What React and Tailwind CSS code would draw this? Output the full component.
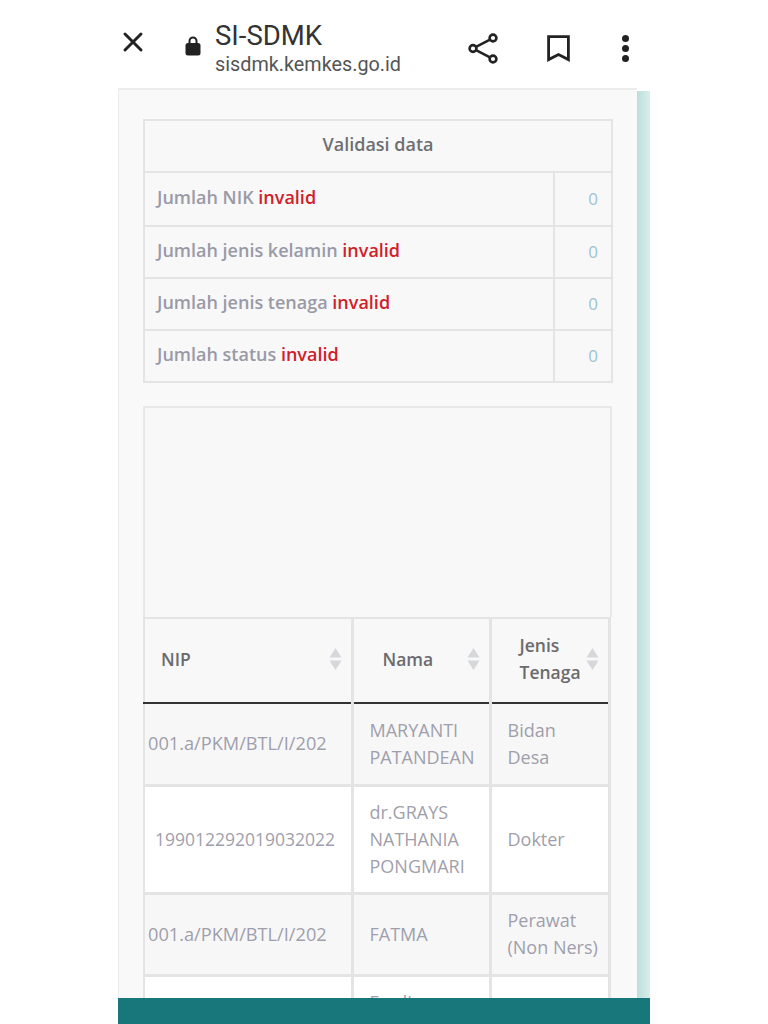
import { X } from "lucide-react";

const validations = [
  { label: "Jumlah NIK", h: "h-[54px]" },
  { label: "Jumlah jenis kelamin", h: "h-[52px]" },
  { label: "Jumlah jenis tenaga", h: "h-[52px]" },
  { label: "Jumlah status", h: "h-[52px]" },
];

const rows = [
  { nip: "001.a/PKM/BTL/I/202", nipClass: "pl-[3px] text-[18.2px]", nama: ["MARYANTI", "PATANDEAN"], jenis: ["Bidan", "Desa"], bg: "bg-[#f7f7f8]", h: "h-[82px]" },
  { nip: "199012292019032022", nipClass: "pl-[10px] text-[17.5px]", nama: ["dr.GRAYS", "NATHANIA", "PONGMARI"], jenis: ["Dokter"], bg: "bg-white", h: "h-[108px]" },
  { nip: "001.a/PKM/BTL/I/202", nipClass: "pl-[3px] text-[18.2px]", nama: ["FATMA"], jenis: ["Perawat", "(Non Ners)"], bg: "bg-[#f7f7f8]", h: "h-[82px]" },
  { nip: "", nipClass: "", nama: ["Ferdi", "\u00a0", "\u00a0"], jenis: [""], bg: "bg-white", h: "h-[108px]" },
];

function SortIcon() {
  return (
    <svg width="13" height="22" viewBox="0 0 13 22" className="shrink-0">
      <path d="M6.5 0 L12.5 9.5 H0.5 Z" fill="#d5d7da" />
      <path d="M6.5 22 L12.5 12.5 H0.5 Z" fill="#d5d7da" />
    </svg>
  );
}

function Head({ pl, lines }) {
  return (
    <th className="border-r-[3px] border-b-2 border-r-[#e4e4e4] border-b-[#333333] p-0 font-semibold text-[#6b6b6d]">
      <div className={`flex items-center justify-between pr-[9px] pb-[3px] ${pl}`}>
        <div className="text-left text-[17.5px] leading-[27px]">
          {lines.map((l) => (
            <div key={l}>{l}</div>
          ))}
        </div>
        <SortIcon />
      </div>
    </th>
  );
}

export default function App() {
  return (
    <div className="relative mx-auto h-[1024px] w-[532px] overflow-hidden bg-white font-['Open_Sans',sans-serif]">
      <header className="flex h-[88px] items-center pt-[8px] text-[#222222]">
        <X size={32} strokeWidth={2.2} className="-ml-px mt-[-12px] shrink-0" />
        <svg width="16" height="20" viewBox="0 0 16 20" className="ml-[36px] mt-[-4px] shrink-0">
          <path d="M4.5 8 V5 a3.5 3.5 0 0 1 7 0 V8" fill="none" stroke="#222222" strokeWidth="2" />
          <rect x="0.5" y="7" width="15" height="12.5" rx="2.5" fill="#222222" />
        </svg>
        <div className="ml-[14px] mt-[4px] w-[243px] font-['Roboto',sans-serif]">
          <div className="text-[27.5px] leading-[30px] text-[#333333]">SI-SDMK</div>
          <div className="text-[19.8px] leading-[28px] text-[#555555]">sisdmk.kemkes.go.id</div>
        </div>
        <svg width="30" height="31" viewBox="0 0 30 31" className="ml-[10px] shrink-0" fill="none" stroke="#222222" strokeWidth="2.6">
          <circle cx="25" cy="5" r="3.4" />
          <circle cx="5" cy="15.5" r="3.4" />
          <circle cx="25" cy="26" r="3.4" />
          <path d="M8 13.9 L22 6.6 M8 17.1 L22 24.4" />
        </svg>
        <svg width="23" height="27" viewBox="0 0 23 27" className="ml-[49px] shrink-0" fill="none" stroke="#222222" strokeWidth="2.8">
          <path d="M1.6 1.6 H21.4 V24.6 L11.5 19.6 L1.6 24.6 Z" />
        </svg>
        <div className="ml-[52px] flex shrink-0 flex-col gap-[3px]">
          <span className="h-[7px] w-[7px] rounded-full bg-[#222222]" />
          <span className="h-[7px] w-[7px] rounded-full bg-[#222222]" />
          <span className="h-[7px] w-[7px] rounded-full bg-[#222222]" />
        </div>
      </header>

      <div className="flex">
        <main className="h-[936px] w-[519px] border-t-2 border-l border-[#ececec] bg-[#f9f9fa] pl-[24px] pr-[24px] pt-[29px]">
          <table className="w-[470px] table-fixed border-collapse border-2 border-[#e4e4e4] bg-[#f8f8f9]">
            <colgroup>
              <col />
              <col className="w-[58px]" />
            </colgroup>
            <tbody>
              <tr className="h-[52px] border-b-2 border-[#e4e4e4]">
                <th colSpan={2} className="pb-[3px] text-center text-[18px] font-semibold text-[#6f6f72]">
                  Validasi data
                </th>
              </tr>
              {validations.map((v) => (
                <tr key={v.label} className={`${v.h} border-b-2 border-[#e4e4e4]`}>
                  <td className="pb-[4px] pl-[12px] text-[18px] font-semibold text-[#9a9aa6]">
                    {v.label} <span className="text-[#d0202a]">invalid</span>
                  </td>
                  <td className="border-l-2 border-[#e4e4e4] pr-[13px] text-right text-[17px] text-[#9fc2d2]">
                    0
                  </td>
                </tr>
              ))}
            </tbody>
          </table>

          <div className="mt-[23px] h-[211px] w-[469px] border-2 border-b-0 border-[#e8e8e8] bg-[#f8f8f9]" />

          <table className="w-[465px] table-fixed border-collapse">
            <colgroup>
              <col className="w-[208px]" />
              <col className="w-[138px]" />
              <col className="w-[119px]" />
            </colgroup>
            <thead className="bg-[#f8f8f9]">
              <tr className="h-[85px] border-t-2 border-l-2 border-[#e4e4e4]">
                <Head pl="pl-[16px]" lines={["NIP"]} />
                <Head pl="pl-[29px]" lines={["Nama"]} />
                <Head pl="pl-[28px]" lines={["Jenis", "Tenaga"]} />
              </tr>
            </thead>
            <tbody>
              {rows.map((r, i) => (
                <tr key={i} className={`${r.h} ${r.bg} text-[18px] leading-[27px] text-[#9f9fab]`}>
                  <td className={`overflow-hidden whitespace-nowrap border-[3px] border-t-0 border-l-2 border-[#e4e4e4] ${r.nipClass}`}>
                    {r.nip}
                  </td>
                  <td className="border-[3px] border-t-0 border-x-[3px] border-[#e4e4e4] pl-[16px]">
                    {r.nama.map((n, j) => (
                      <div key={j}>{n}</div>
                    ))}
                  </td>
                  <td className="border-[3px] border-t-0 border-l-0 border-[#e4e4e4] pl-[16px]">
                    {r.jenis.map((n) => (
                      <div key={n} className="whitespace-nowrap">{n}</div>
                    ))}
                  </td>
                </tr>
              ))}
            </tbody>
          </table>
        </main>
        <div className="mt-[3px] h-[933px] w-[13px] bg-gradient-to-r from-[#bcdedb] to-[#d9eeec]" />
      </div>

      <div className="absolute bottom-0 left-0 h-[26px] w-full bg-[#17777a]" />
    </div>
  );
}
